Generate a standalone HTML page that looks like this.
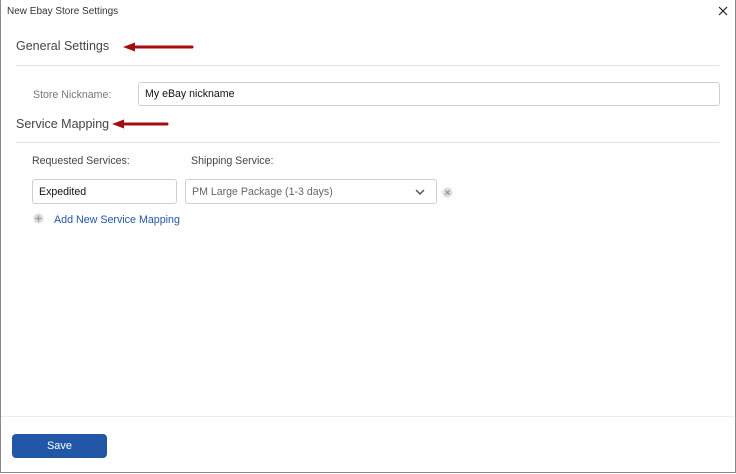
<!DOCTYPE html>
<html><head><style>
body{margin:0;width:736px;height:474px;background:#fff;font-family:"Liberation Sans",sans-serif;position:relative;overflow:hidden}
.a{position:absolute}
.win{left:0;top:0;width:734px;height:472px;border:1px solid #8a8a8a;border-top:none}
.t{color:#333}
.h{font-size:12.5px;color:#444}
.hr{height:1px;background:#e2e2e2}
.lab{font-size:10.6px;color:#444}
.inp{border:1px solid #cfcfcf;border-radius:3px;box-sizing:border-box;font-size:10.6px;padding-left:6px;display:flex;align-items:center}
</style></head><body>
<div class="a win"></div>
<div class="a t" style="left:7px;top:6px;font-size:10px">New Ebay Store Settings</div>
<svg class="a" style="left:718px;top:6px" width="10" height="10"><path d="M1 1L9 9M9 1L1 9" stroke="#222" stroke-width="1.2"/></svg>
<div class="a h" style="left:16px;top:39px">General Settings</div>
<svg class="a" style="left:122px;top:41px" width="72" height="12"><path d="M12 6H70" stroke="#a40d0d" stroke-width="3" stroke-linecap="round"/><path d="M1 6L13 1.5V10.5Z" fill="#a40d0d"/></svg>
<div class="a hr" style="left:16px;top:65px;width:703px"></div>
<div class="a lab" style="left:33px;top:89px;color:#777">Store Nickname:</div>
<div class="a inp" style="left:138px;top:82px;width:582px;height:24px;color:#111">My eBay nickname</div>
<div class="a h" style="left:16px;top:117px">Service Mapping</div>
<svg class="a" style="left:111px;top:118px" width="58" height="12"><path d="M12 6H56" stroke="#a40d0d" stroke-width="3" stroke-linecap="round"/><path d="M1 6L13 1.5V10.5Z" fill="#a40d0d"/></svg>
<div class="a hr" style="left:16px;top:142px;width:703px"></div>
<div class="a lab" style="left:32px;top:155px">Requested Services:</div>
<div class="a lab" style="left:191px;top:155px">Shipping Service:</div>
<div class="a inp" style="left:32px;top:179px;width:145px;height:25px;color:#111">Expedited</div>
<div class="a inp" style="left:185px;top:179px;width:252px;height:25px;color:#666">PM Large Package (1-3 days)</div>
<svg class="a" style="left:415px;top:188px" width="10" height="8"><path d="M1 2L5 6L9 2" stroke="#555" stroke-width="1.5" fill="none"/></svg>
<svg class="a" style="left:442px;top:187px" width="11" height="11"><circle cx="5.5" cy="5.5" r="5" fill="#ddd"/><path d="M3.5 3.5L7.5 7.5M7.5 3.5L3.5 7.5" stroke="#888" stroke-width="1"/></svg>
<svg class="a" style="left:33px;top:213px" width="11" height="11"><circle cx="5.5" cy="5.5" r="5" fill="#ddd"/><path d="M5.5 2.5V8.5M2.5 5.5H8.5" stroke="#999" stroke-width="1.2"/></svg>
<div class="a" style="left:54px;top:214px;font-size:10.7px;color:#2457a3">Add New Service Mapping</div>
<div class="a hr" style="left:1px;top:416px;width:733px;background:#ececec"></div>
<div class="a" style="left:12px;top:434px;width:95px;height:24px;background:#2257a8;border-radius:4px;color:#fff;font-size:11px;display:flex;align-items:center;justify-content:center">Save</div>
</body></html>
